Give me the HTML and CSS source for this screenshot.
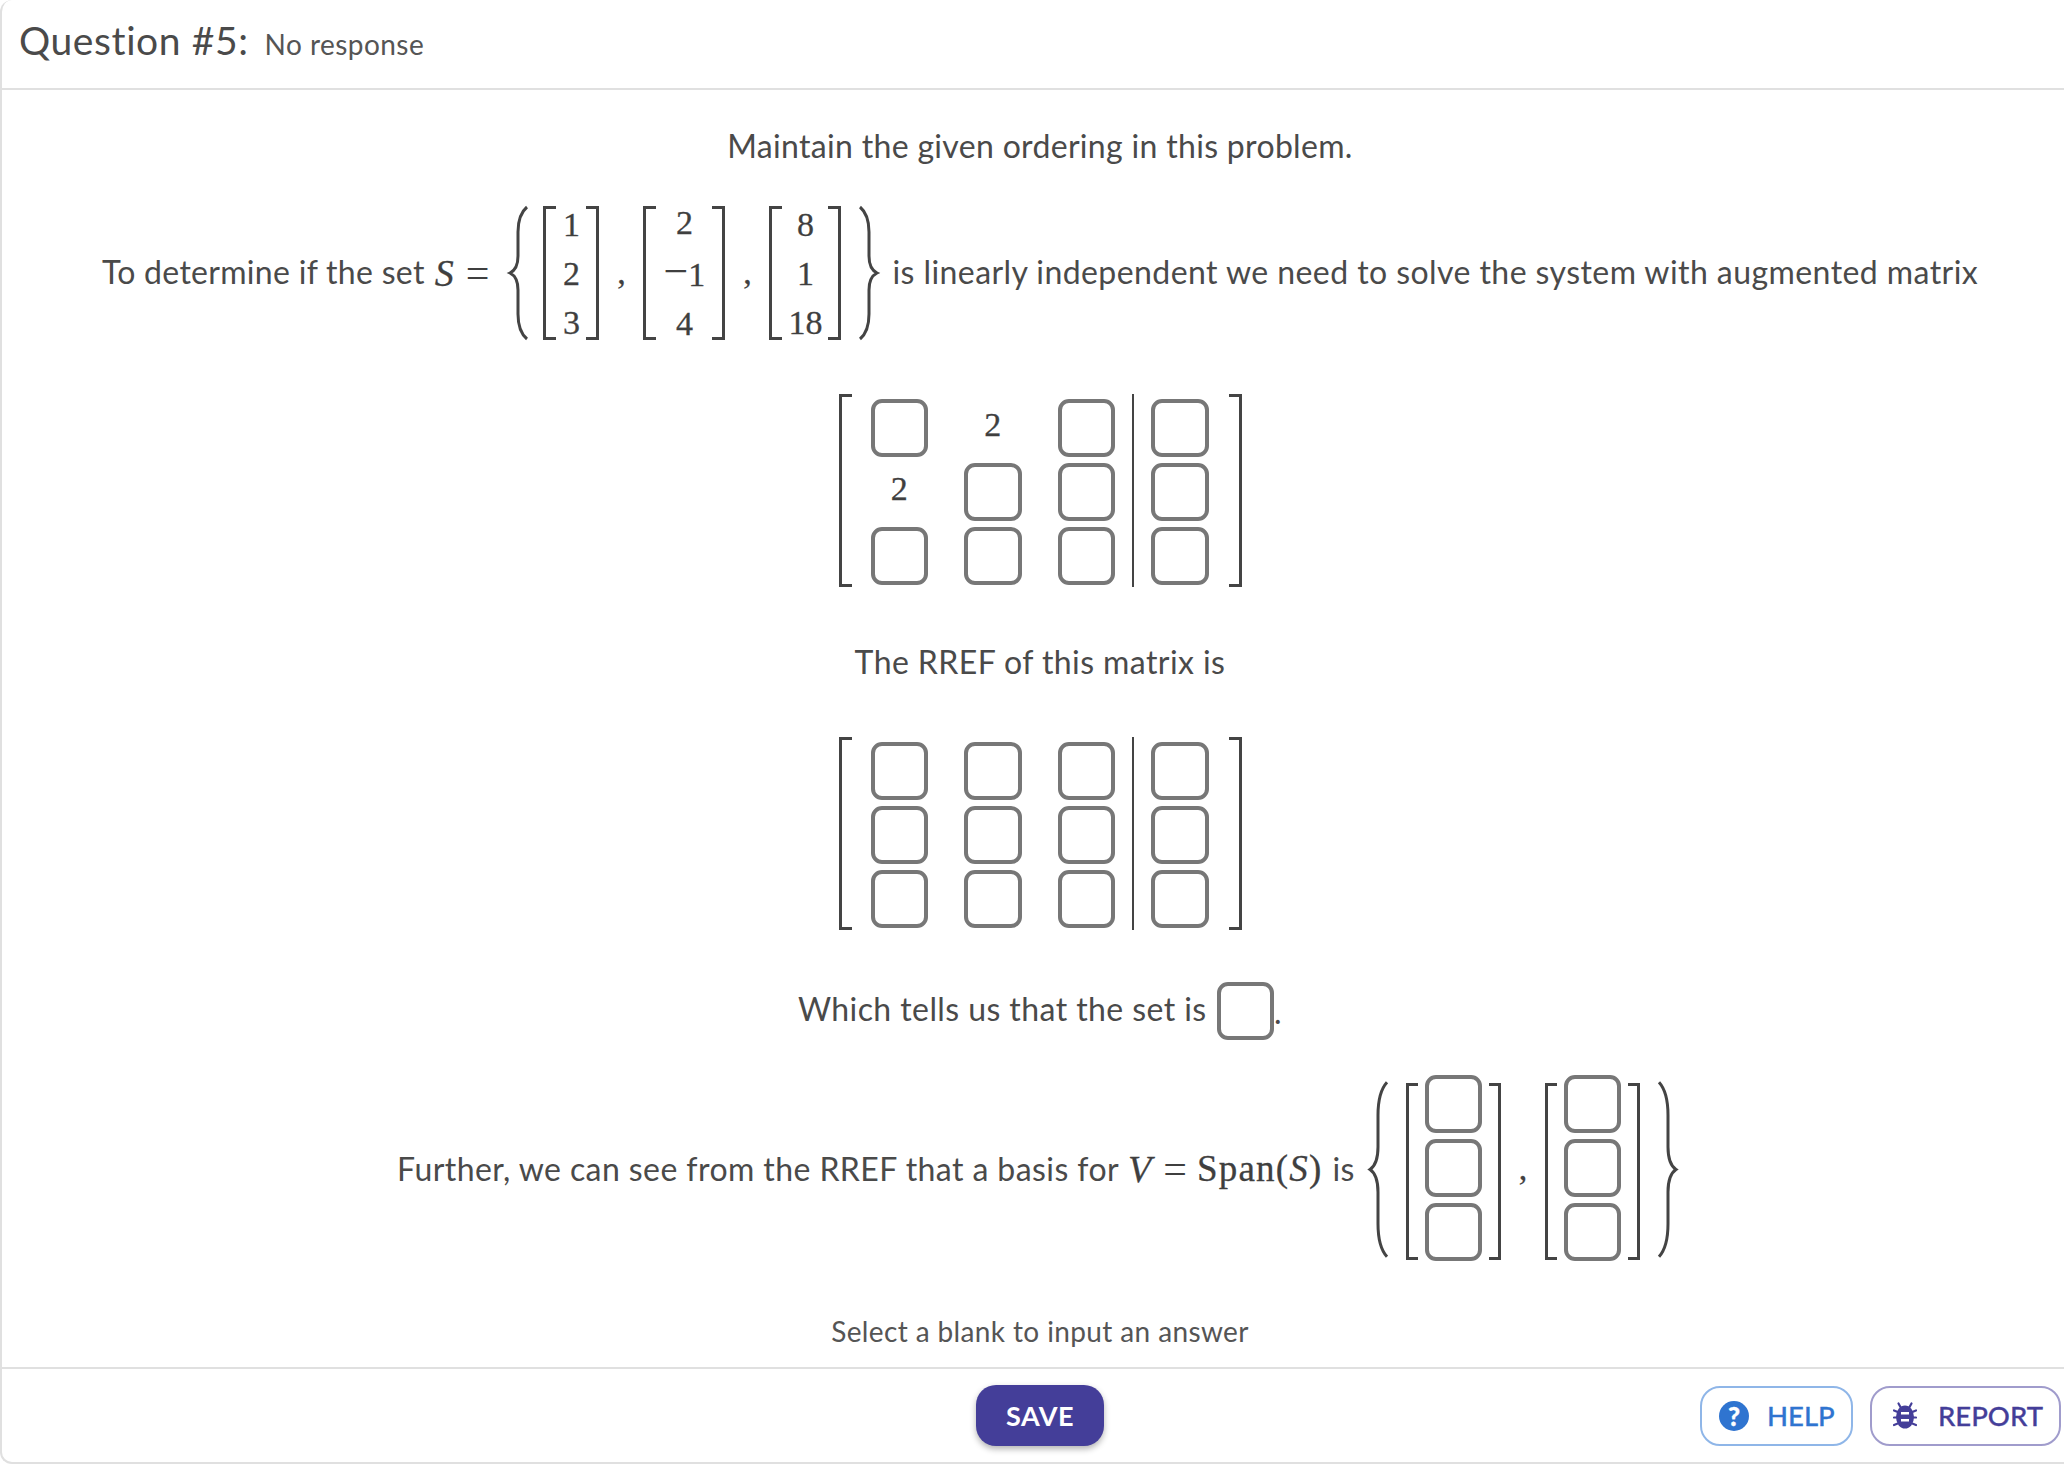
FILE: index.html
```html
<!DOCTYPE html>
<html>
<head>
    <title>Question 5</title>
    <link rel="stylesheet" href="styles.css">
</head>
<body>
<div class="card">
    <div class="card-head">
        <span class="q-title">Question #5:</span>
        <span class="q-status">No response</span>
    </div>

    <div class="card-body">
        <p class="line l-maintain">Maintain the given ordering in this problem.</p>

        <div class="line l-set">
            <span class="before-set">To determine if the set</span>
            <span class="math mi s-var">S</span>
            <span class="math eq">=</span>
            <svg class="brace" viewBox="0 0 20 134" preserveAspectRatio="none"><path d="M18 1C12 6 9 14 9 26V50C9 59 7 64 1 67C7 70 9 75 9 84V108C9 120 12 128 18 133"/></svg>
            <div class="vec v1">
                <span class="brk brk-l"></span>
                <div class="vec-col math"><span>1</span><span>2</span><span>3</span></div>
                <span class="brk brk-r"></span>
            </div>
            <span class="math comma">,</span>
            <div class="vec v2">
                <span class="brk brk-l"></span>
                <div class="vec-col math"><span>2</span><span><span class="minus">−</span>1</span><span>4</span></div>
                <span class="brk brk-r"></span>
            </div>
            <span class="math comma">,</span>
            <div class="vec v3">
                <span class="brk brk-l"></span>
                <div class="vec-col math"><span>8</span><span>1</span><span>18</span></div>
                <span class="brk brk-r"></span>
            </div>
            <svg class="brace flip" viewBox="0 0 20 134" preserveAspectRatio="none"><path d="M18 1C12 6 9 14 9 26V50C9 59 7 64 1 67C7 70 9 75 9 84V108C9 120 12 128 18 133"/></svg>
            <span class="after-set">is linearly independent we need to solve the system with augmented matrix</span>
        </div>

        <div class="matrix m-first">
            <span class="brk brk-l"></span>
            <div class="m-cells">
                <span class="blank"></span><span class="num math">2</span><span class="blank"></span>
                <span class="num math">2</span><span class="blank"></span><span class="blank"></span>
                <span class="blank"></span><span class="blank"></span><span class="blank"></span>
            </div>
            <span class="m-sep"></span>
            <div class="m-last">
                <span class="blank"></span><span class="blank"></span><span class="blank"></span>
            </div>
            <span class="brk brk-r"></span>
        </div>

        <p class="line l-rref">The RREF of this matrix is</p>

        <div class="matrix m-second">
            <span class="brk brk-l"></span>
            <div class="m-cells">
                <span class="blank"></span><span class="blank"></span><span class="blank"></span>
                <span class="blank"></span><span class="blank"></span><span class="blank"></span>
                <span class="blank"></span><span class="blank"></span><span class="blank"></span>
            </div>
            <span class="m-sep"></span>
            <div class="m-last">
                <span class="blank"></span><span class="blank"></span><span class="blank"></span>
            </div>
            <span class="brk brk-r"></span>
        </div>

        <div class="line l-which">
            <span>Which tells us that the set is</span>
            <span class="blank"></span>
            <span class="dot">.</span>
        </div>

        <div class="line l-basis">
            <span>Further, we can see from the RREF that a basis for</span>
            <span class="math mi v-var">V</span>
            <span class="math eq eq-basis">=</span>
            <span class="math span-s">Span(<i>S</i>)</span>
            <span class="is-word">is</span>
            <svg class="brace tall" viewBox="0 0 20 134" preserveAspectRatio="none"><path d="M18 1C12 6 9 14 9 26V50C9 59 7 64 1 67C7 70 9 75 9 84V108C9 120 12 128 18 133"/></svg>
            <div class="bvec">
                <span class="brk brk-l"></span>
                <div class="bvec-col"><span class="blank"></span><span class="blank"></span><span class="blank"></span></div>
                <span class="brk brk-r"></span>
            </div>
            <span class="math comma">,</span>
            <div class="bvec bvec-last">
                <span class="brk brk-l"></span>
                <div class="bvec-col"><span class="blank"></span><span class="blank"></span><span class="blank"></span></div>
                <span class="brk brk-r"></span>
            </div>
            <svg class="brace tall flip" viewBox="0 0 20 134" preserveAspectRatio="none"><path d="M18 1C12 6 9 14 9 26V50C9 59 7 64 1 67C7 70 9 75 9 84V108C9 120 12 128 18 133"/></svg>
        </div>

        <p class="line l-hint">Select a blank to input an answer</p>
    </div>

    <div class="card-foot">
        <div></div>
        <button class="btn-save">SAVE</button>
        <div class="foot-right">
            <button class="btn-out btn-help"><span class="help-ico">?</span>HELP</button>
            <button class="btn-out btn-report">
                <svg class="bug-ico" viewBox="0 0 24 28">
                    <g class="bug-lines">
                        <path d="M8 6 5.500 1.500M16 6 18.500 1.500"/>
                        <path d="M1 8.500 6 10.500M23 8.500 18 10.500"/>
                        <path d="M1 15.500H6M23 15.500H18"/>
                        <path d="M1 23 6 21M23 23 18 21"/>
                    </g>
                    <ellipse class="bug-body" cx="12" cy="15" rx="9" ry="11.500"/>
                    <rect class="bug-hole" x="8" y="10" width="8" height="2.500"/>
                    <rect class="bug-hole" x="8" y="17" width="8" height="2.500"/>
                </svg>
                REPORT
            </button>
        </div>
    </div>
</div>
</body>
</html>
```

FILE: styles.css
```css
html, body {
    margin: 0;
    height: 100%;
    overflow: hidden;
    background: #fff;
}
body {
    font-family: "Lato", "Open Sans", sans-serif;
    color: #4a4a4a;
}
.card {
    width: 2078px;
    height: 1464px;
    border-left: 2px solid #e0e0e0;
    border-bottom: 2px solid #e0e0e0;
    border-radius: 12px;
    display: flex;
    flex-direction: column;
    box-sizing: border-box;
}
.card-head {
    height: 90px;
    box-sizing: border-box;
    border-bottom: 2px solid #e0e0e0;
    padding: 12px 0 0 17px;
    display: flex;
    align-items: baseline;
    gap: 16px;
}
.q-title {
    font-size: 39px;
    line-height: 56px;
    letter-spacing: 0.6px;
}
.q-status {
    font-size: 28px;
    letter-spacing: 0.45px;
    color: #555;
}
.card-body {
    flex: 1;
    display: flex;
    flex-direction: column;
    align-items: center;
}
.line {
    margin: 0;
    font-size: 32px;
    line-height: 44px;
    letter-spacing: 0.42px;
    display: flex;
    align-items: center;
    white-space: nowrap;
}
.math {
    font-family: "Liberation Serif", serif;
    font-size: 34px;
    letter-spacing: 0;
    color: #3f3f3f;
    -webkit-text-stroke: 0.3px #3f3f3f;
}
.mi {
    font-style: italic;
    font-size: 38px;
}
.l-maintain {
    margin-top: 34px;
    letter-spacing: 0.32px;
}
.l-set {
    margin-top: 36px;
    height: 138px;
}
.before-set {
    letter-spacing: 0.3px;
    padding-bottom: 2px;
}
.s-var {
    margin-left: 10px;
}
.eq {
    font-size: 42px;
    margin-left: 12px;
    margin-right: 20px;
    -webkit-text-stroke: 0;
}
.eq-basis {
    margin-right: 10px;
}
.brace {
    width: 20px;
    height: 134px;
    flex: none;
    overflow: visible;
}
.brace path {
    fill: none;
    stroke: #444;
    stroke-width: 3;
    vector-effect: non-scaling-stroke;
}
.flip {
    transform: scaleX(-1);
}
.brace.tall {
    height: 177px;
}
.vec {
    display: flex;
    height: 134px;
}
.vec.v1 {
    width: 56px;
    margin-left: 14px;
}
.vec.v2 {
    width: 82px;
}
.vec.v3 {
    width: 72px;
    margin-right: 17px;
}
.brk {
    width: 13px;
    flex: none;
    box-sizing: border-box;
    border: 3px solid #444;
}
.brk-l {
    border-right: none;
}
.brk-r {
    border-left: none;
}
.vec-col {
    flex: 1;
    display: flex;
    flex-direction: column;
    align-items: center;
    justify-content: center;
    line-height: 49px;
    height: 134px;
}
.minus {
    font-size: 44px;
    -webkit-text-stroke: 0;
}
.comma {
    width: 44px;
    text-align: center;
}
.after-set {
    margin-left: 14px;
    letter-spacing: 0.43px;
    padding-bottom: 2px;
}
.matrix {
    display: flex;
    height: 193px;
}
.m-first {
    margin-top: 52px;
}
.m-second {
    margin-top: 53px;
}
.matrix .brk-l {
    margin-right: 19px;
}
.matrix .brk-r {
    margin-left: 20px;
}
.m-cells {
    display: grid;
    grid-template-columns: repeat(3, 57.5px);
    grid-auto-rows: 58px;
    column-gap: 36px;
    row-gap: 6px;
    padding-top: 5px;
}
.m-last {
    display: grid;
    grid-template-columns: 57.5px;
    grid-auto-rows: 58px;
    row-gap: 6px;
    padding-top: 5px;
}
.m-sep {
    width: 2px;
    background: #444;
    margin: 0 17px;
}
.blank {
    display: block;
    width: 57.5px;
    height: 58px;
    box-sizing: border-box;
    border: 4px solid #777;
    border-radius: 11px;
    background: #fff;
    flex: none;
}
.num {
    display: flex;
    align-items: center;
    justify-content: center;
    padding-bottom: 6px;
}
.l-rref {
    margin-top: 53px;
}
.l-which {
    margin-top: 52px;
    height: 58px;
}
.l-which > span:first-child {
    margin-right: 10px;
    padding-bottom: 4px;
}
.l-which .dot {
    padding-top: 2px;
}
.l-basis {
    margin-top: 36px;
    height: 186px;
    padding-right: 6px;
}
.v-var {
    margin-left: 9px;
}
.span-s {
    font-size: 37px;
    letter-spacing: 1.2px;
    white-space: nowrap;
}
.is-word {
    margin-left: 10px;
    margin-right: 14px;
}
.bvec {
    display: flex;
    height: 177px;
    margin-left: 17px;
    margin-top: 7px;
    align-self: flex-start;
}
.bvec-last {
    margin-left: 0;
    margin-right: 17px;
}
.bvec .brk {
    width: 12px;
    height: 177px;
}
.bvec-col {
    width: 71px;
    display: flex;
    flex-direction: column;
    align-items: center;
    gap: 6px;
    margin-top: -8px;
}
.l-hint {
    margin-top: 49px;
    font-size: 28px;
    line-height: 40px;
    letter-spacing: 0.38px;
    color: #555;
}
.card-foot {
    height: 95px;
    box-sizing: border-box;
    border-top: 2px solid #e0e0e0;
    display: grid;
    grid-template-columns: 1fr auto 1fr;
    align-items: center;
    padding-right: 17px;
    padding-left: 17px;
}
button {
    font-family: "Lato", "Open Sans", sans-serif;
    cursor: pointer;
}
.btn-save {
    width: 128px;
    height: 61px;
    background: #443e99;
    color: #fff;
    border: none;
    border-radius: 20px;
    font-size: 27px;
    font-weight: 700;
    letter-spacing: 0.5px;
    box-shadow: 0 3px 6px rgba(0, 0, 0, 0.3);
}
.foot-right {
    display: flex;
    justify-content: flex-end;
    gap: 17px;
}
.btn-out {
    height: 60px;
    background: #fff;
    border-radius: 20px;
    border: 2px solid;
    font-size: 27.5px;
    font-weight: 500;
    -webkit-text-stroke: 0.3px;
    display: flex;
    align-items: center;
    padding: 0;
    box-sizing: border-box;
}
.btn-help {
    width: 153px;
    color: #2f74d0;
    border-color: #8fb6e8;
    padding-left: 17px;
    gap: 18px;
}
.btn-report {
    width: 191px;
    color: #443e99;
    border-color: #a09ccc;
    padding-left: 21px;
    gap: 21px;
}
.help-ico {
    width: 30px;
    height: 30px;
    border-radius: 50%;
    background: #2f74d0;
    color: #fff;
    font-size: 26px;
    font-weight: 900;
    display: flex;
    align-items: center;
    justify-content: center;
}
.bug-ico {
    width: 24px;
    height: 28px;
    flex: none;
}
.bug-lines path {
    fill: none;
    stroke: #443e99;
    stroke-width: 2.2;
    stroke-linecap: round;
}
.bug-body {
    fill: #443e99;
}
.bug-hole {
    fill: #fff;
}
```
